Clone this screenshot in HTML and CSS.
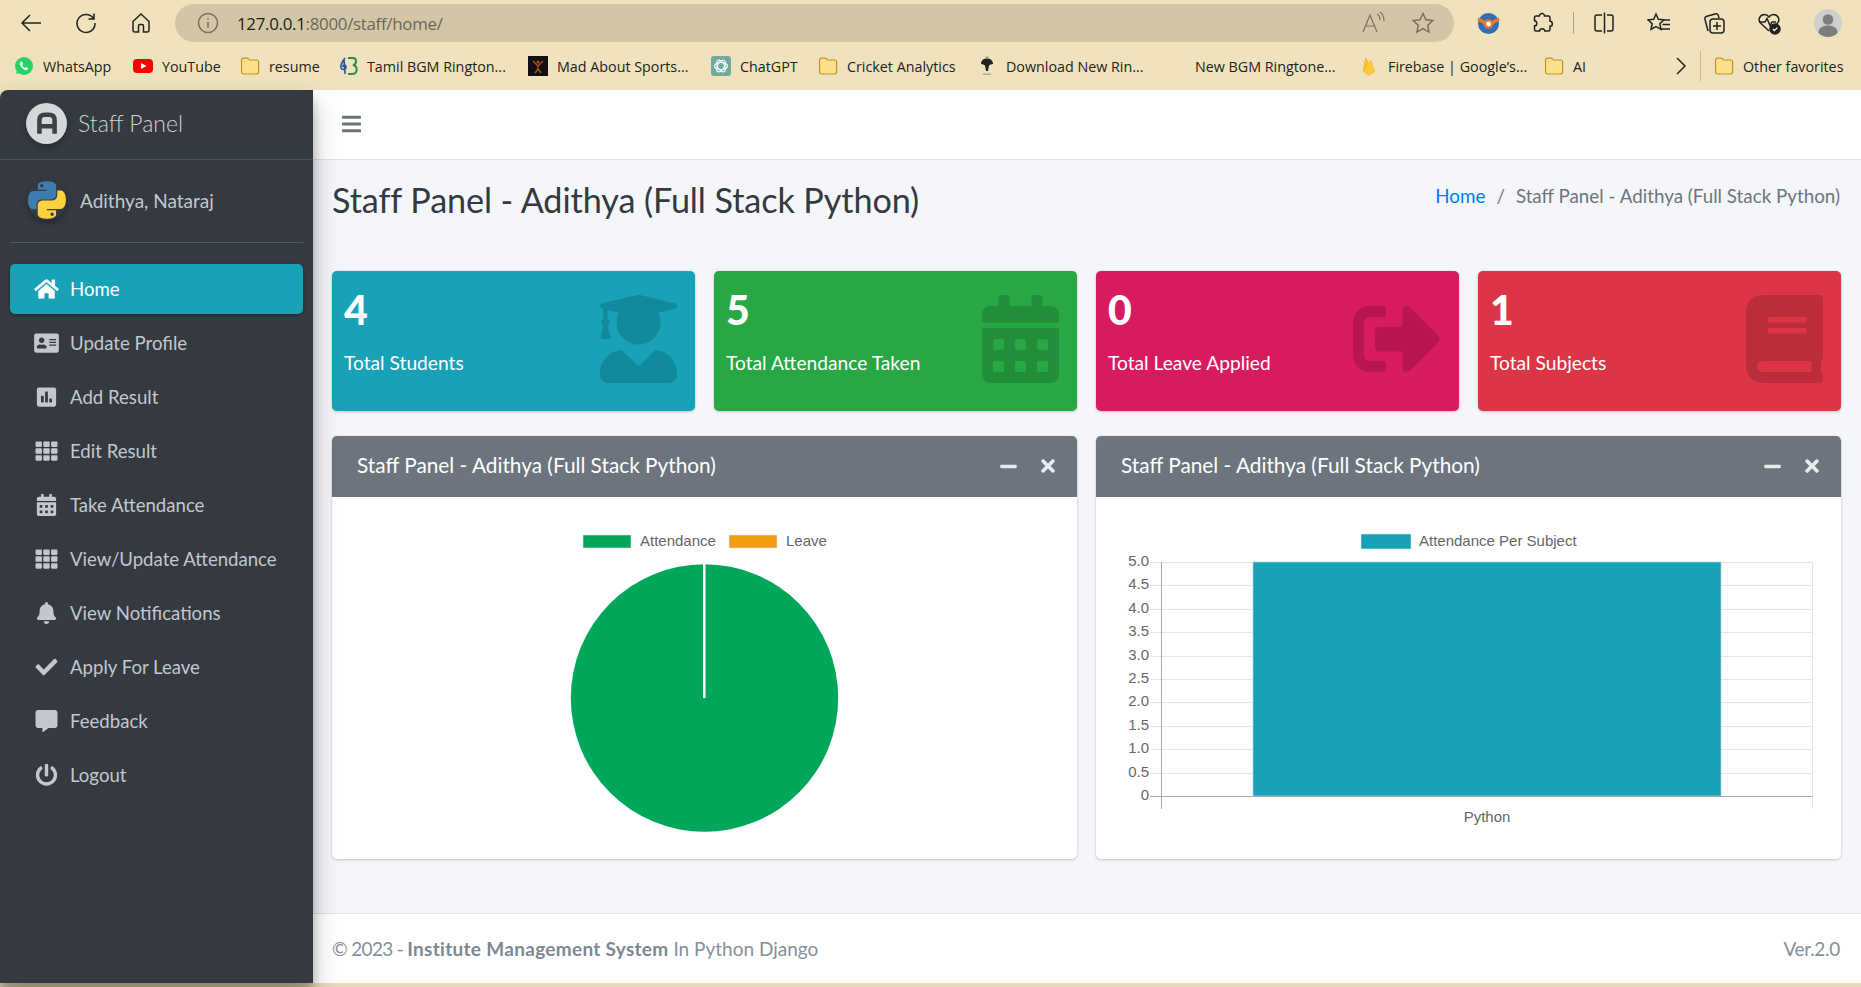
FILE: index.html
```html
<!DOCTYPE html>
<html lang="en">
<head>
<meta charset="utf-8">
<title>Staff Panel</title>
<link rel="stylesheet" href="styles.css">
</head>
<body>
<svg class="sprite" aria-hidden="true">
  <symbol id="folder" viewBox="0 0 20 20"><path d="M1.5 4.2c0-1.2.9-2 2-2h3.6c.7 0 1.2.3 1.6.8l.7 1h7.2c1.2 0 2 .9 2 2v10c0 1.2-.9 2-2 2h-13c-1.2 0-2-.9-2-2z" fill="#fbdf8c" stroke="#c2951f" stroke-width="1.2"/></symbol>
  <symbol id="th" viewBox="0 0 512 512"><path d="M149.333 56v80c0 13.255-10.745 24-24 24H24c-13.255 0-24-10.745-24-24V56c0-13.255 10.745-24 24-24h101.333c13.255 0 24 10.745 24 24zm181.334 240v-80c0-13.255-10.745-24-24-24H205.333c-13.255 0-24 10.745-24 24v80c0 13.255 10.745 24 24 24h101.333c13.256 0 24.001-10.745 24.001-24zm32-240v80c0 13.255 10.745 24 24 24H488c13.255 0 24-10.745 24-24V56c0-13.255-10.745-24-24-24H386.667c-13.255 0-24 10.745-24 24zm-32 80V56c0-13.255-10.745-24-24-24H205.333c-13.255 0-24 10.745-24 24v80c0 13.255 10.745 24 24 24h101.333c13.256 0 24.001-10.745 24.001-24zm-205.334 56H24c-13.255 0-24 10.745-24 24v80c0 13.255 10.745 24 24 24h101.333c13.255 0 24-10.745 24-24v-80c0-13.255-10.745-24-24-24zM0 376v80c0 13.255 10.745 24 24 24h101.333c13.255 0 24-10.745 24-24v-80c0-13.255-10.745-24-24-24H24c-13.255 0-24 10.745-24 24zm386.667-56H488c13.255 0 24-10.745 24-24v-80c0-13.255-10.745-24-24-24H386.667c-13.255 0-24 10.745-24 24v80c0 13.255 10.745 24 24 24zm0 160H488c13.255 0 24-10.745 24-24v-80c0-13.255-10.745-24-24-24H386.667c-13.255 0-24 10.745-24 24v80c0 13.255 10.745 24 24 24zM181.333 376v80c0 13.255 10.745 24 24 24h101.333c13.255 0 24-10.745 24-24v-80c0-13.255-10.745-24-24-24H205.333c-13.255 0-24 10.745-24 24z"/></symbol>
  <symbol id="cal" viewBox="0 0 448 512"><path d="M0 464c0 26.5 21.5 48 48 48h352c26.5 0 48-21.5 48-48V192H0v272zm320-196c0-6.6 5.4-12 12-12h40c6.6 0 12 5.4 12 12v40c0 6.6-5.4 12-12 12h-40c-6.6 0-12-5.4-12-12v-40zm0 128c0-6.6 5.4-12 12-12h40c6.6 0 12 5.4 12 12v40c0 6.6-5.4 12-12 12h-40c-6.6 0-12-5.4-12-12v-40zM192 268c0-6.6 5.4-12 12-12h40c6.6 0 12 5.4 12 12v40c0 6.6-5.4 12-12 12h-40c-6.6 0-12-5.4-12-12v-40zm0 128c0-6.6 5.4-12 12-12h40c6.6 0 12 5.4 12 12v40c0 6.6-5.4 12-12 12h-40c-6.6 0-12-5.4-12-12v-40zM64 268c0-6.6 5.4-12 12-12h40c6.6 0 12 5.4 12 12v40c0 6.6-5.4 12-12 12H76c-6.6 0-12-5.4-12-12v-40zm0 128c0-6.6 5.4-12 12-12h40c6.6 0 12 5.4 12 12v40c0 6.6-5.4 12-12 12H76c-6.6 0-12-5.4-12-12v-40zM400 64h-48V16c0-8.8-7.2-16-16-16h-32c-8.8 0-16 7.2-16 16v48H160V16c0-8.8-7.2-16-16-16h-32c-8.8 0-16 7.2-16 16v48H48C21.5 64 0 85.5 0 112v48h448v-48c0-26.5-21.5-48-48-48z"/></symbol>
  <symbol id="minus" viewBox="0 0 448 512"><path d="M416 208H32c-17.67 0-32 14.33-32 32v32c0 17.67 14.33 32 32 32h384c17.67 0 32-14.33 32-32v-32c0-17.67-14.33-32-32-32z"/></symbol>
  <symbol id="times" viewBox="0 0 352 512"><path d="M242.72 256l100.07-100.07c12.28-12.28 12.28-32.19 0-44.48l-22.24-22.24c-12.28-12.28-32.19-12.28-44.48 0L176 189.28 75.93 89.21c-12.28-12.28-32.19-12.28-44.48 0L9.21 111.45c-12.28 12.28-12.28 32.19 0 44.48L109.28 256 9.21 356.07c-12.28 12.28-12.28 32.19 0 44.48l22.24 22.24c12.28 12.28 32.2 12.28 44.48 0L176 322.72l100.07 100.07c12.28 12.28 32.2 12.28 44.48 0l22.24-22.24c12.28-12.28 12.28-32.19 0-44.48L242.72 256z"/></symbol>
</svg>

<header class="chrome">
  <div class="toolbar">
    <div class="nav-btn"><svg class="tb-icon" viewBox="0 0 24 24"><path d="M22 12H3M11 4l-8 8 8 8"/></svg></div>
    <div class="nav-btn"><svg class="tb-icon" viewBox="0 0 24 24"><path d="M19.5 7.5A9 9 0 1 0 21 12M20 2.5v5.5h-5.5"/></svg></div>
    <div class="nav-btn"><svg class="tb-icon" viewBox="0 0 24 24"><path d="M4 10.5 12 3l8 7.5V19a2 2 0 0 1-2 2h-3.5v-6a1.5 1.5 0 0 0-1.5-1.5h-2A1.5 1.5 0 0 0 9.500 15v6H6a2 2 0 0 1-2-2z"/></svg></div>
    <div class="address">
      <svg class="tb-icon tb-muted" viewBox="0 0 24 24"><circle cx="12" cy="12" r="9.500"/><path d="M12 11v6M12 7v1.600"/></svg>
      <span class="url"><span class="url-host">127.0.0.1</span>:8000/staff/home/</span>
      <div class="address-actions">
        <svg class="tb-icon tb-muted" viewBox="0 0 24 24"><path d="M2 21 9 4l7 17M4.500 15h9M16 3c2 1 3 3 3 6M19 1c3 2 4 5 4 9" stroke-width="1.200"/></svg>
        <svg class="tb-icon tb-muted" viewBox="0 0 24 24"><path d="m12 2.500 2.900 6.300 6.900.8-5.100 4.700 1.400 6.800-6.100-3.400-6.100 3.400 1.400-6.800-5.100-4.700 6.900-.8z"/></svg>
      </div>
    </div>
    <div class="tools">
      <svg class="tool ext" viewBox="0 0 24 24"><circle cx="12" cy="12" r="11" fill="#2f6fb5"/><path d="M1 7 9 12M23 7l-8 5" stroke="#e9762b" stroke-width="3.500" fill="none"/><circle cx="12" cy="12.500" r="3.800" fill="#fff" stroke="#e9762b" stroke-width="2.500"/></svg>
      <svg class="tool tb-icon" viewBox="0 0 24 24"><path d="M9 3.500c2-2 4.500-.8 4.500 1.500h4c1 0 1.500.6 1.500 1.500v3.800c2.800 0 3.500 4.700 0 5v3.200c0 1-.6 1.500-1.500 1.500h-3.700c-.3-3-5-3-5.200 0H5c-1 0-1.500-.6-1.500-1.500v-3.700c3 0 3-4.800 0-5V6.500C3.500 5.500 4 5 5 5h3.300c0-.6.200-1 .7-1.500z"/></svg>
      <span class="tool-sep"></span>
      <svg class="tool tb-icon" viewBox="0 0 24 24"><path d="M10 4H5a2 2 0 0 0-2 2v12a2 2 0 0 0 2 2h5M15 4h4a2 2 0 0 1 2 2v12a2 2 0 0 1-2 2h-4M12.500 1.500v21"/></svg>
      <svg class="tool tb-icon" viewBox="0 0 24 24"><path d="m9 3 2.300 5.200 5.700.6-4.200 3.900 1.200 5.600L9 15.500l-5 2.800 1.200-5.600L1 8.800l5.700-.6zM16 9h7M15.500 13.500H23M14.500 18H23"/></svg>
      <svg class="tool tb-icon" viewBox="0 0 24 24"><path d="M6 20 3 8.500c-.3-1.500.5-2.800 2-3.200L13 3c1.500-.4 2.800.3 3.400 1.800L17 7"/><rect x="8" y="8" width="14" height="14" rx="3"/><path d="M15 11v8M11 15h8"/></svg>
      <svg class="tool tb-icon" viewBox="0 0 24 24"><path d="M12 20 3.500 12C.5 8.500 3 3.500 7.500 3.500c2 0 3.500 1 4.500 2.500 1-1.500 2.500-2.500 4.500-2.500 4.500 0 7 5 4 8.500l-1 1"/><path d="M2 11h6l2-3.500 3 7 2-3.500h4"/><circle cx="18" cy="18" r="5" fill="#222"/><path d="m15.800 18 1.600 1.600 3-3" stroke="#fff" stroke-width="1.300"/></svg>
      <svg class="tool avatar" viewBox="0 0 28 28"><circle cx="14" cy="14" r="14" fill="#cfcfcf"/><circle cx="14" cy="10.500" r="5.300" fill="#7d7d7d"/><path d="M4.500 24c0-5.500 4-7.500 9.500-7.500s9.500 2 9.500 7.500c-2.500 2.500-6 4-9.500 4s-7-1.500-9.500-4z" fill="#7d7d7d"/></svg>
    </div>
  </div>
  <nav class="bookmarks">
    <a class="bm"><svg class="fav" viewBox="0 0 20 20"><circle cx="10" cy="10" r="9" fill="#25d366"/><path d="M2 18l1.500-5L7 16.500z" fill="#25d366"/><path d="M7 5.500c-1.500 1-1.500 2.700-.2 4.700 1.300 2 3.300 3.700 5 3.800 1.200 0 2.200-.8 2.400-1.800l-2.200-1.200-1 1c-1.300-.5-2.400-1.700-3-3l1-1L8 5.500z" fill="#fff"/></svg><span>WhatsApp</span></a>
    <a class="bm"><svg class="fav" viewBox="0 0 20 20"><rect y="3" width="20" height="14" rx="4" fill="#f00"/><path d="m8 7 5.500 3L8 13z" fill="#fff"/></svg><span>YouTube</span></a>
    <a class="bm"><svg class="fav"><use href="#folder"/></svg><span>resume</span></a>
    <a class="bm"><svg class="fav" viewBox="0 0 20 20"><path d="M10 2h5c4 0 4 6 0 7 5 1 5 9-1 9h-4" fill="none" stroke="#2c8a4a" stroke-width="2"/><path d="M7 2c-3 4-5 7-4 10 1 2 5 2 5-1s-4-2-3 0M6 3l1 15" fill="none" stroke="#24559c" stroke-width="1.600"/></svg><span>Tamil BGM Rington...</span></a>
    <a class="bm"><svg class="fav" viewBox="0 0 20 20"><rect width="20" height="20" fill="#111"/><path d="M5 5l5 5 5-5M10 10v3l-3 4M10 13l3 4" fill="none" stroke="#b3541e" stroke-width="1.300"/><circle cx="10" cy="6" r="1.500" fill="#b3541e"/></svg><span>Mad About Sports...</span></a>
    <a class="bm"><svg class="fav" viewBox="0 0 20 20"><rect width="20" height="20" rx="3" fill="#74aa9c"/><g fill="none" stroke="#fff" stroke-width="1.100"><ellipse cx="10" cy="10" rx="6.500" ry="3.500"/><ellipse cx="10" cy="10" rx="6.500" ry="3.500" transform="rotate(60 10 10)"/><ellipse cx="10" cy="10" rx="6.500" ry="3.500" transform="rotate(120 10 10)"/></g></svg><span>ChatGPT</span></a>
    <a class="bm"><svg class="fav"><use href="#folder"/></svg><span>Cricket Analytics</span></a>
    <a class="bm"><svg class="fav" viewBox="0 0 20 20"><path d="M4 8c0-3.500 2.500-5.500 6-5.500s6 2 6 5.500c-2 0-2.500 1-4 1.500L11 15H9l-1-5.500C6.500 9 6 8 4 8z" fill="#222"/><rect x="8.500" y=".5" width="3" height="2" fill="#999"/><rect x="6" y="17.500" width="8" height="1.500" fill="#aaa"/></svg><span>Download New Rin...</span></a>
    <a class="bm"><span class="fav"></span><span>New BGM Ringtone...</span></a>
    <a class="bm"><svg class="fav" viewBox="0 0 20 20"><path d="M4 15.500 6.500 1l3.500 6.500 2-3.500 4 11.500-6 4z" fill="#f6820d"/><path d="M4 15.500 6.500 1 10 7.500z" fill="#ffc024"/><path d="M4 15.500 12 4l4 11.500-6 4z" fill="#fcca3f"/></svg><span>Firebase | Google’s...</span></a>
    <a class="bm"><svg class="fav"><use href="#folder"/></svg><span>AI</span></a>
    <a class="bm-more"><svg class="tb-icon more" viewBox="0 0 12 20"><path d="m2 2 8 8-8 8"/></svg></a>
    <a class="bm bm-other"><svg class="fav"><use href="#folder"/></svg><span>Other favorites</span></a>
  </nav>
</header>

<div class="app">
  <aside class="sidebar">
    <div class="brand">
      <span class="brand-logo"><svg viewBox="0 0 24 24"><path d="M5 21V8.500C5 5 7 3.500 10 3.500h4c3 0 5 1.500 5 5V21M5 14h14M5 8.500" fill="none" stroke="#3d4147" stroke-width="4.200"/></svg></span>
      <span class="brand-text">Staff Panel</span>
    </div>
    <div class="user">
      <span class="user-img"><svg viewBox="0 0 111 110"><path fill="#3f7cb0" d="M54.900 0c-28 0-26.300 12.200-26.300 12.200v12.600h26.700v3.800H18C18 28.600 0 26.500 0 54.900s15.700 27.400 15.700 27.400h9.400V69.100s-.5-15.700 15.500-15.700h26.600s15 .2 15-14.500V14.600S84.500 0 54.900 0zM40.100 8.500c2.700 0 4.800 2.200 4.800 4.800s-2.200 4.800-4.800 4.800-4.800-2.200-4.800-4.800 2.200-4.800 4.800-4.800z"/><path fill="#fdd23e" d="M55.700 109.800c28 0 26.300-12.200 26.300-12.200V85H55.300v-3.800h37.300s18 2 18-26.300S94.900 27.500 94.900 27.500h-9.400v13.100s.5 15.700-15.500 15.700H43.400s-15-.2-15 14.500v24.300s-2.300 14.700 27.300 14.700zm14.800-8.500c-2.700 0-4.800-2.200-4.800-4.800s2.200-4.800 4.800-4.800 4.800 2.200 4.800 4.800-2.200 4.800-4.800 4.800z"/></svg></span>
      <span class="user-name">Adithya, Nataraj</span>
    </div>
    <ul class="menu">
      <li class="item active"><svg class="mi" viewBox="0 0 576 512"><path d="M280.370 148.260L96 300.110V464a16 16 0 0 0 16 16l112.060-.29a16 16 0 0 0 15.920-16V368a16 16 0 0 1 16-16h64a16 16 0 0 1 16 16v95.640a16 16 0 0 0 16 16.050L464 480a16 16 0 0 0 16-16V300L295.670 148.260a12.190 12.190 0 0 0-15.300 0zM571.600 251.470L488 182.560V44.050a12 12 0 0 0-12-12h-56a12 12 0 0 0-12 12v72.610L318.470 43a48 48 0 0 0-61 0L4.340 251.470a12 12 0 0 0-1.600 16.900l25.500 31A12 12 0 0 0 45.150 301l235.220-193.740a12.190 12.190 0 0 1 15.300 0L530.900 301a12 12 0 0 0 16.900-1.600l25.500-31a12 12 0 0 0-1.700-16.930z"/></svg>Home</li>
      <li class="item"><svg class="mi" viewBox="0 0 576 512"><path d="M528 32H48C21.500 32 0 53.500 0 80v352c0 26.500 21.500 48 48 48h480c26.500 0 48-21.500 48-48V80c0-26.500-21.500-48-48-48zm-352 96c35.300 0 64 28.700 64 64s-28.700 64-64 64-64-28.700-64-64 28.700-64 64-64zm112 236.800c0 10.600-10 19.200-22.400 19.200H86.400C74 384 64 375.400 64 364.800v-19.200c0-31.800 30.100-57.600 67.200-57.600h5c12.300 5.100 25.700 8 39.800 8s27.600-2.900 39.800-8h5c37.100 0 67.200 25.800 67.200 57.600v19.200zM512 312c0 4.400-3.600 8-8 8H360c-4.400 0-8-3.600-8-8v-16c0-4.400 3.600-8 8-8h144c4.400 0 8 3.600 8 8v16zm0-64c0 4.400-3.600 8-8 8H360c-4.400 0-8-3.600-8-8v-16c0-4.400 3.600-8 8-8h144c4.400 0 8 3.600 8 8v16zm0-64c0 4.400-3.600 8-8 8H360c-4.400 0-8-3.600-8-8v-16c0-4.400 3.600-8 8-8h144c4.400 0 8 3.600 8 8v16z"/></svg>Update Profile</li>
      <li class="item"><svg class="mi" viewBox="0 0 448 512"><path d="M400 32H48C21.500 32 0 53.500 0 80v352c0 26.500 21.500 48 48 48h352c26.500 0 48-21.500 48-48V80c0-26.500-21.500-48-48-48zM160 368c0 8.840-7.160 16-16 16h-32c-8.840 0-16-7.160-16-16V240c0-8.840 7.160-16 16-16h32c8.840 0 16 7.160 16 16v128zm96 0c0 8.840-7.160 16-16 16h-32c-8.840 0-16-7.160-16-16V144c0-8.840 7.160-16 16-16h32c8.840 0 16 7.160 16 16v224zm96 0c0 8.840-7.160 16-16 16h-32c-8.840 0-16-7.160-16-16v-64c0-8.840 7.160-16 16-16h32c8.840 0 16 7.160 16 16v64z"/></svg>Add Result</li>
      <li class="item"><svg class="mi"><use href="#th"/></svg>Edit Result</li>
      <li class="item"><svg class="mi"><use href="#cal"/></svg>Take Attendance</li>
      <li class="item"><svg class="mi"><use href="#th"/></svg>View/Update Attendance</li>
      <li class="item"><svg class="mi" viewBox="0 0 448 512"><path d="M224 512c35.320 0 63.970-28.650 63.970-64H160.030c0 35.350 28.650 64 63.970 64zm215.390-149.710c-19.320-20.760-55.470-51.990-55.470-154.290 0-77.700-54.480-139.900-127.940-155.160V32c0-17.670-14.320-32-31.980-32s-31.980 14.330-31.980 32v20.840C118.560 68.100 64.080 130.300 64.080 208c0 102.300-36.150 133.530-55.470 154.290-6 6.450-8.660 14.160-8.610 21.710.11 16.400 12.980 32 32.100 32h383.800c19.120 0 32-15.600 32.100-32 .05-7.550-2.610-15.270-8.610-21.710z"/></svg>View Notifications</li>
      <li class="item"><svg class="mi" viewBox="0 0 512 512"><path d="M173.898 439.404l-166.400-166.400c-9.997-9.997-9.997-26.206 0-36.204l36.203-36.204c9.997-9.998 26.207-9.998 36.204 0L192 312.690 432.095 72.596c9.997-9.997 26.207-9.997 36.204 0l36.203 36.204c9.997 9.997 9.997 26.206 0 36.204l-294.400 294.401c-9.998 9.997-26.207 9.997-36.204-.001z"/></svg>Apply For Leave</li>
      <li class="item"><svg class="mi" viewBox="0 0 512 512"><path d="M448 0H64C28.700 0 0 28.700 0 64v288c0 35.300 28.700 64 64 64h96v84c0 9.800 11.200 15.500 19.100 9.700L304 416h144c35.300 0 64-28.700 64-64V64c0-35.300-28.700-64-64-64z"/></svg>Feedback</li>
      <li class="item"><svg class="mi" viewBox="0 0 512 512"><path d="M400 54.100c63 45 104 118.600 104 201.900 0 136.800-110.800 247.700-247.500 248C120 504.300 8.200 393 8 256.400 7.900 173.100 48.900 99.300 111.800 54.200c11.700-8.300 28-4.800 35 7.700L162.600 90c5.900 10.500 3.100 23.800-6.600 31-41.500 30.800-68 79.600-68 134.900-.1 92.300 74.500 168.100 168 168.100 91.600 0 168.600-74.200 168-169.100-.3-51.800-24.700-101.800-68.100-134-9.700-7.200-12.400-20.500-6.500-30.900l15.800-28.100c7-12.400 23.200-16.100 34.800-7.800zM296 264V24c0-13.300-10.700-24-24-24h-32c-13.300 0-24 10.700-24 24v240c0 13.300 10.700 24 24 24h32c13.300 0 24-10.700 24-24z"/></svg>Logout</li>
    </ul>
  </aside>

  <main class="main">
    <div class="topnav"><svg class="bars" viewBox="0 0 448 512"><path d="M16 132h416c8.837 0 16-7.163 16-16V76c0-8.837-7.163-16-16-16H16C7.163 60 0 67.163 0 76v40c0 8.837 7.163 16 16 16zm0 160h416c8.837 0 16-7.163 16-16v-40c0-8.837-7.163-16-16-16H16c-8.837 0-16 7.163-16 16v40c0 8.837 7.163 16 16 16zm0 160h416c8.837 0 16-7.163 16-16v-40c0-8.837-7.163-16-16-16H16c-8.837 0-16 7.163-16 16v40c0 8.837 7.163 16 16 16z"/></svg></div>
    <div class="content">
      <div class="page-head">
        <h1 class="page-title">Staff Panel - Adithya (Full Stack Python)</h1>
        <div class="crumbs"><a class="crumb-link">Home</a><span class="crumb-sep">/</span><span>Staff Panel - Adithya (Full Stack Python)</span></div>
      </div>
      <div class="cards">
        <div class="card c-info"><div class="card-text"><h3>4</h3><p>Total Students</p></div><svg class="card-icon" viewBox="0 0 448 512"><path d="M319.400 320.600L224 416l-95.400-95.400C57.100 323.700 0 382.200 0 454.400v9.600c0 26.500 21.500 48 48 48h352c26.500 0 48-21.500 48-48v-9.600c0-72.200-57.100-130.700-128.600-133.800zM13.600 79.800l6.400 1.500v58.400c-7 4.200-12 11.500-12 20.300 0 8.400 4.600 15.400 11.100 19.700L3.500 242c-1.700 6.900 2.100 14 7.600 14h41.800c5.500 0 9.300-7.100 7.600-14l-15.600-62.300C51.400 175.400 56 168.400 56 160c0-8.800-5-16.100-12-20.300V87.100l66 15.900c-8.600 17.200-14 36.400-14 57 0 70.700 57.300 128 128 128s128-57.300 128-128c0-20.600-5.300-39.800-14-57l96.300-23.200c18.200-4.400 18.200-27.100 0-31.500l-190.400-46c-13-3.100-26.700-3.100-39.700 0L13.600 48.200c-18.100 4.400-18.100 27.200 0 31.600z"/></svg></div>
        <div class="card c-success"><div class="card-text"><h3>5</h3><p>Total Attendance Taken</p></div><svg class="card-icon"><use href="#cal"/></svg></div>
        <div class="card c-pink"><div class="card-text"><h3>0</h3><p>Total Leave Applied</p></div><svg class="card-icon card-icon-wide" viewBox="0 0 512 512"><path d="M497 273L329 441c-15 15-41 4.500-41-17v-96H152c-13.300 0-24-10.700-24-24v-96c0-13.300 10.700-24 24-24h136V88c0-21.400 25.900-32 41-17l168 168c9.300 9.400 9.300 24.600 0 34zM192 436v-40c0-6.600-5.400-12-12-12H96c-17.700 0-32-14.300-32-32V160c0-17.700 14.300-32 32-32h84c6.600 0 12-5.400 12-12V76c0-6.600-5.400-12-12-12H96c-53 0-96 43-96 96v192c0 53 43 96 96 96h84c6.600 0 12-5.400 12-12z"/></svg></div>
        <div class="card c-danger"><div class="card-text"><h3>1</h3><p>Total Subjects</p></div><svg class="card-icon" viewBox="0 0 448 512"><path d="M448 360V24c0-13.300-10.700-24-24-24H96C43 0 0 43 0 96v320c0 53 43 96 96 96h328c13.300 0 24-10.700 24-24v-16c0-7.500-3.500-14.300-8.900-18.700-4.200-15.400-4.200-59.300 0-74.700 5.400-4.300 8.900-11.100 8.900-18.600zM128 134c0-3.300 2.700-6 6-6h212c3.300 0 6 2.700 6 6v20c0 3.300-2.700 6-6 6H134c-3.300 0-6-2.700-6-6v-20zm0 64c0-3.300 2.700-6 6-6h212c3.300 0 6 2.700 6 6v20c0 3.300-2.700 6-6 6H134c-3.300 0-6-2.700-6-6v-20zm253.400 250H96c-17.700 0-32-14.300-32-32 0-17.600 14.400-32 32-32h285.400c-1.900 17.100-1.900 46.900 0 64z"/></svg></div>
      </div>
      <div class="panels">
        <section class="panel">
          <div class="panel-head"><span class="panel-title">Staff Panel - Adithya (Full Stack Python)</span><div class="panel-tools"><svg class="pt-minus"><use href="#minus"/></svg><svg class="pt-times"><use href="#times"/></svg></div></div>
          <svg class="chart" viewBox="0 0 745 362">
            <rect class="lg" x="251" y="38" width="48" height="13" fill="#00a65a"/>
            <text class="ct" x="308" y="49">Attendance</text>
            <rect class="lg" x="397" y="38" width="48" height="13" fill="#f39c12"/>
            <text class="ct" x="454" y="49">Leave</text>
            <circle cx="372.500" cy="201" r="133.700" fill="#00a65a"/>
            <rect x="371" y="67" width="2.500" height="134" fill="#fff"/>
          </svg>
        </section>
        <section class="panel">
          <div class="panel-head"><span class="panel-title">Staff Panel - Adithya (Full Stack Python)</span><div class="panel-tools"><svg class="pt-minus"><use href="#minus"/></svg><svg class="pt-times"><use href="#times"/></svg></div></div>
          <svg class="chart" viewBox="0 0 745 362">
            <rect class="lg" x="265" y="37" width="50" height="15" fill="#17a2b8"/>
            <text class="ct" x="323" y="49">Attendance Per Subject</text>
            <g class="grid">
              <path d="M54 65.500H717M54 88.500H717M54 112.500H717M54 135.500H717M54 159.500H717M54 182.500H717M54 205.500H717M54 229.500H717M54 252.500H717M54 276.500H717"/>
              <path d="M716.500 65V312"/>
            </g>
            <rect x="157" y="65" width="468" height="234" fill="#17a2b8" stroke="#a2d9e2" stroke-width=".7"/>
            <path class="axis" d="M65.500 65V312M54 299.500H717"/>
            <g class="ct ct-end">
              <text x="53" y="69">5.0</text><text x="53" y="92">4.5</text><text x="53" y="116">4.0</text><text x="53" y="139">3.5</text><text x="53" y="163">3.0</text><text x="53" y="186">2.5</text><text x="53" y="209">2.0</text><text x="53" y="233">1.5</text><text x="53" y="256">1.0</text><text x="53" y="280">0.5</text><text x="53" y="303">0</text>
            </g>
            <text class="ct ct-mid" x="391" y="325">Python</text>
          </svg>
        </section>
      </div>
    </div>
    <footer class="footer"><div><span class="foot-copy">© 2023 - </span><strong>Institute Management System</strong> In Python Django</div><div class="foot-ver">Ver.2.0</div></footer>
  </main>
</div>
<div class="bottom-strip"></div>
</body>
</html>
```
FILE: styles.css
```css
* { box-sizing: border-box; }
html, body { margin: 0; height: 987px; overflow: hidden; }
body { background: #efe2bd; font-family: "Lato", "Noto Sans", sans-serif; color: #343a40; }
.sprite { display: none; }

.chrome { height: 90px; background: #efe2bd; font-family: "Open Sans", sans-serif; }
.toolbar { height: 42px; padding-top: 4px; display: flex; align-items: center; padding-left: 3px; }
.nav-btn { width: 55px; display: flex; align-items: center; justify-content: center; }
.tb-icon { width: 24px; height: 24px; fill: none; stroke: #222; stroke-width: 1.500; }
.tb-muted { stroke: #77705f; }
.address { width: 1279px; margin-left: 7px; height: 38px; border-radius: 19px; background: #d3c6a6; display: flex; align-items: center; padding-left: 21px; flex: none; }
.url { margin-left: 17px; font-size: 16.900px; color: #6b6757; letter-spacing: -.3px; }
.url-host { color: #1e1d18; }
.address-actions { margin-left: auto; display: flex; gap: 26px; padding-right: 19px; }
.tools { display: flex; align-items: center; padding-left: 23px; }
.tool { margin-right: 31px; flex: none; }
.ext { width: 23px; height: 23px; }
.tool-sep { width: 1px; height: 22px; background: #a9a28c; margin: 0 18px 0 -13px; }
.avatar { width: 28px; height: 28px; margin-left: 2px; margin-right: 0; }

.bookmarks { height: 48px; padding: 0 0 0 14px; display: grid; grid-template-columns: 119px 107px 98px 190px 183px 107px 159px 189px 193px 185px 131px 39px 1fr; align-items: center; font-size: 14.300px; color: #222; }
.bm { display: flex; align-items: center; gap: 9px; white-space: nowrap; }
.fav { width: 20px; height: 20px; flex: none; display: block; }
.bm-more { height: 30px; border-right: 1px solid #c3b99c; display: flex; align-items: center; margin-right: 13px; }
.more { width: 12px; height: 20px; }

.app { height: 893px; display: flex; }
.sidebar { width: 313px; flex: none; background: #343a40; color: #c2c7d0; border-top-left-radius: 8px; box-shadow: 0 14px 28px rgba(0,0,0,.25), 0 10px 10px rgba(0,0,0,.22); position: relative; z-index: 2; font-size: 18.600px; }
.brand { height: 70px; display: flex; align-items: center; padding-left: 26px; border-bottom: 1px solid #4b545c; }
.brand-logo { width: 41px; height: 41px; border-radius: 50%; background: #d5d7d9; display: flex; align-items: center; justify-content: center; box-shadow: 0 3px 6px rgba(0,0,0,.25); margin-bottom: 2px; }
.brand-logo svg { width: 26px; height: 26px; }
.brand-text { margin: 0 0 4px 11px; font-size: 23px; font-weight: 300; color: #ced1d4; }
.user { margin: 0 10px; height: 83px; border-bottom: 1px solid #4f5962; display: flex; align-items: center; padding-left: 17px; padding-bottom: 2px; }
.user-img { width: 40px; height: 40px; border-radius: 50%; display: flex; align-items: center; justify-content: center; box-shadow: 0 3px 6px rgba(0,0,0,.3); }
.user-img svg { width: 38px; height: 38px; }
.user-name { margin-left: 13px; font-size: 19px; }
.menu { list-style: none; margin: 21px 10px 0; padding: 0; display: flex; flex-direction: column; gap: 4px; }
.item { height: 50px; border-radius: 5px; display: flex; align-items: center; padding-left: 60px; position: relative; }
.mi { position: absolute; left: 24px; top: 50%; transform: translateY(-50%); width: 25px; height: 22px; fill: #c2c7d0; }
.active { background: #17a2b8; color: #fff; box-shadow: 0 1px 3px rgba(0,0,0,.4); }
.active .mi { fill: #fff; }

.main { flex: 1; min-width: 0; display: flex; flex-direction: column; background: #f4f6f9; border-top-left-radius: 8px; }
.topnav { height: 70px; flex: none; background: #fff; border-bottom: 1px solid #dee2e6; display: flex; align-items: center; padding: 0 0 2px 29px; }
.bars { width: 19px; height: 22px; fill: #6c757d; }
.content { flex: 1; padding: 0 20px 0 19px; }
.page-head { height: 111px; display: flex; justify-content: space-between; align-items: flex-start; padding-top: 18px; }
.page-title { margin: 0; font-size: 34.200px; line-height: 44px; font-weight: 400; letter-spacing: -.1px; }
.crumbs { display: flex; font-size: 18.800px; line-height: 28px; color: #6c757d; padding: 4px 1px 0 0; }
.crumb-link { color: #007bff; }
.crumb-sep { margin: 0 11px; }
.cards { display: grid; grid-template-columns: repeat(4, 1fr); gap: 19px; }
.card { height: 140px; border-radius: 5px; color: #fff; display: flex; justify-content: space-between; padding: 0 18px 0 12px; box-shadow: 0 0 1px rgba(0,0,0,.125), 0 1px 3px rgba(0,0,0,.2); }
.card-text h3 { margin: 14px 0 0; font-size: 41px; line-height: 50px; font-weight: 900; }
.card-text p { margin: 15px 0 0; font-size: 19.200px; line-height: 26px; }
.card-icon { width: 77px; height: 88px; margin-top: 24px; fill: rgba(0,0,0,.15); flex: none; }
.card-icon-wide { width: 88px; }
.c-info { background: #17a2b8; }
.c-success { background: #28a745; }
.c-pink { background: #d81b60; }
.c-danger { background: #dc3545; }
.panels { display: grid; grid-template-columns: repeat(2, 1fr); gap: 19px; margin-top: 25px; }
.panel { height: 423px; background: #fff; border-radius: 5px; box-shadow: 0 0 1px rgba(0,0,0,.125), 0 1px 3px rgba(0,0,0,.2); overflow: hidden; }
.panel-head { height: 61px; background: #6c757d; color: #fff; display: flex; align-items: center; justify-content: space-between; padding: 0 22px 0 25px; font-size: 20.800px; }
.panel-title { margin-bottom: 5px; }
.panel-tools { display: flex; align-items: center; gap: 24px; margin-bottom: 1px; }
.pt-minus { width: 17px; height: 19px; fill: #fff; fill-opacity: .85; }
.pt-times { width: 14px; height: 20px; fill: #fff; fill-opacity: .85; }
.chart { display: block; width: 745px; height: 362px; }
.ct { font-family: "Liberation Sans", Arial, sans-serif; font-size: 15px; fill: #666; }
.ct-end { text-anchor: end; }
.ct-mid { text-anchor: middle; }
.lg { stroke: #dfe8e6; stroke-width: .6; }
.grid path { fill: none; stroke: #e5e5e5; stroke-width: 1; }
.axis { fill: none; stroke: #a9a9a9; stroke-width: 1; }
.footer { height: 70px; flex: none; background: #fff; border-top: 1px solid #dee2e6; padding: 0 21px 0 19px; display: flex; align-items: center; justify-content: space-between; color: #869099; font-size: 19px; }
.foot-copy { letter-spacing: -.7px; }
.foot-ver { letter-spacing: -.3px; }
.footer strong { color: #7c8892; letter-spacing: .3px; }
.bottom-strip { height: 4px; background: #e8dab4; }
```
